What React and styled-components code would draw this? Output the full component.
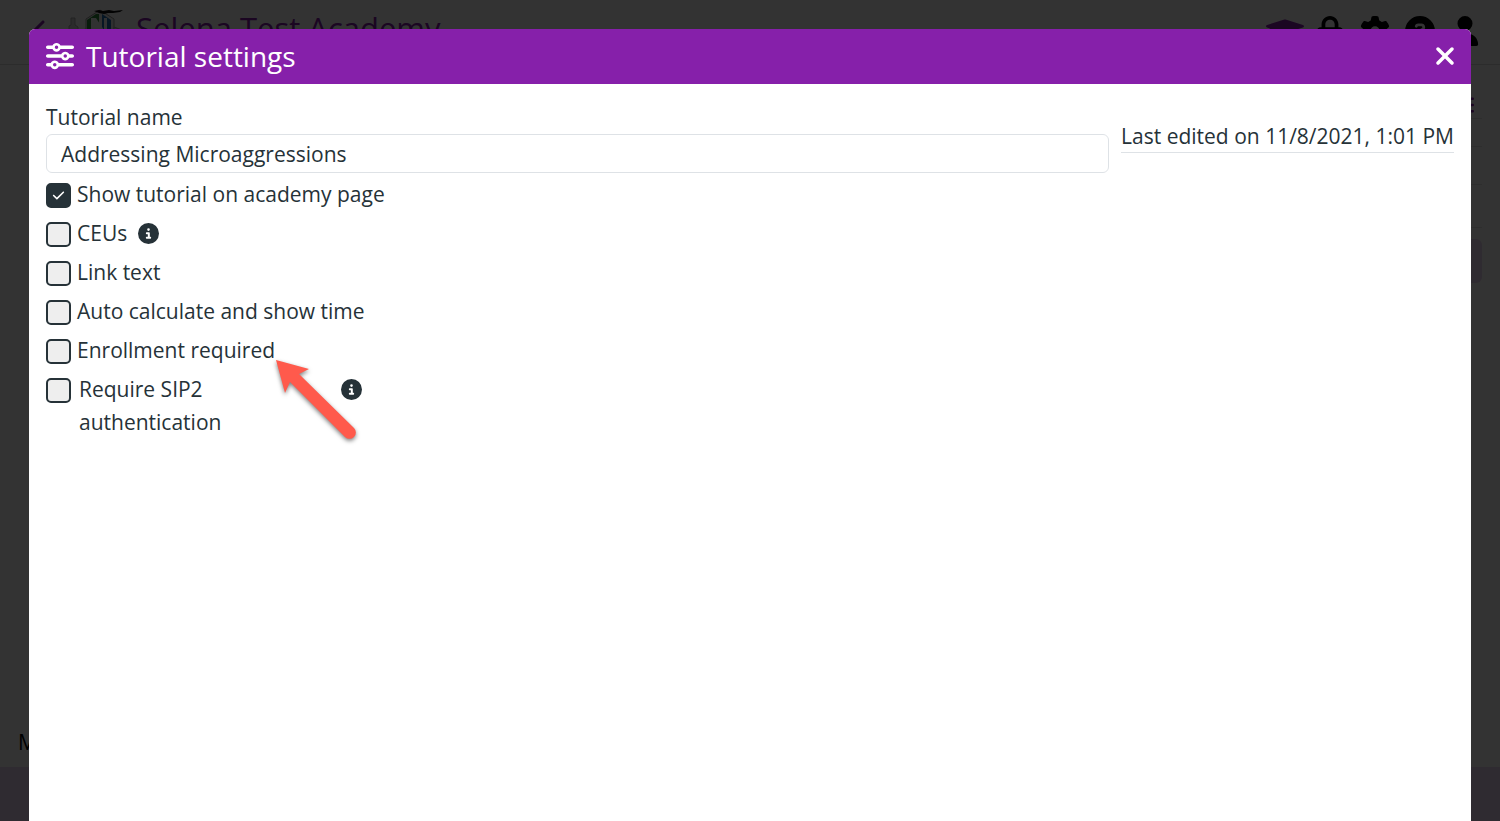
import React, { useState } from 'react'
import styled, { createGlobalStyle } from 'styled-components'
import { FaGraduationCap } from 'react-icons/fa'
import {
  FaCheck,
  FaChevronLeft,
  FaCircleInfo,
  FaCircleQuestion,
  FaGear,
  FaListUl,
  FaLock,
  FaSliders,
  FaUser,
  FaXmark,
} from 'react-icons/fa6'

const GlobalStyle = createGlobalStyle`
  * {
    box-sizing: border-box;
  }

  body {
    margin: 0;
    color: #263238;
    background: #fff;
    font-family: 'Open Sans', 'Noto Sans', sans-serif;
    font-size: 21px;
    line-height: 33px;
    overflow: hidden;
  }
`

/* academy page behind the dialog */

const Page = styled.div`
  display: flex;
  flex-direction: column;
  height: 100vh;
`

const PageHeader = styled.header`
  display: flex;
  align-items: center;
  gap: 12px;
  height: 65px;
  padding: 0 13px 2px 28px;
  border-bottom: 1px solid #dcdcdc;
`

const BackLink = styled.a`
  display: flex;
  width: 28px;
  color: #8620aa;
  font-size: 24px;
`

const PageTitle = styled.h1`
  flex: 1;
  margin: 0;
  padding-bottom: 6px;
  color: #8620aa;
  font-size: 31px;
  font-weight: 400;
  line-height: 40px;
`

const PageNav = styled.nav`
  display: flex;
  align-items: center;
`

const NavButton = styled.button`
  display: flex;
  justify-content: center;
  width: 45px;
  padding: 0;
  border: 0;
  background: none;
  color: ${(props) => props.$color || '#000'};
  font-size: 30px;
`

const PageMain = styled.main`
  flex: 1;
  display: flex;
  flex-direction: column;
  padding: 20px 18px 8px;
`

const TutorialList = styled.div`
  display: flex;
  flex-direction: column;
  align-self: flex-end;
  width: 50%;
`

const ListTools = styled.div`
  display: flex;
  justify-content: flex-end;
  height: 33px;
  padding: 10px 8px 0;
  color: #8620aa;
`

const ListRow = styled.div`
  height: ${(props) => props.$height}px;
  border-top: 1px solid #e4e4e4;
`

const AddButton = styled.button`
  height: 44px;
  margin-top: 11px;
  border: 0;
  border-radius: 6px;
  background: #ecd4f2;
`

const Made = styled.p`
  margin: auto 0 0;
  color: #000;
`

const PageFooter = styled.footer`
  height: 54px;
  background: #ecd4f2;
`

/* dialog */

const Overlay = styled.div`
  position: fixed;
  inset: 0;
  display: flex;
  padding: 29px 29px 0;
  background: rgba(0, 0, 0, 0.8);
`

const Dialog = styled.section`
  position: relative;
  flex: 1;
  background: #fff;
  border-radius: 6px 6px 0 0;
  overflow: hidden;
`

const DialogHeader = styled.header`
  display: flex;
  align-items: center;
  gap: 12px;
  height: 55px;
  padding: 0 12px 1px 17px;
  color: #fff;
  background: #8620aa;
`

const DialogTitle = styled.h2`
  flex: 1;
  margin: 0;
  font-size: 28px;
  font-weight: 400;
  line-height: 36px;
`

const CloseButton = styled.button`
  display: flex;
  padding: 0;
  border: 0;
  background: none;
  color: #fff;
  cursor: pointer;
`

const DialogBody = styled.div`
  display: flex;
  align-items: flex-start;
  gap: 12px;
  padding: 17px;
`

const Form = styled.form`
  flex: 1;
  display: flex;
  flex-direction: column;
`

const NameInput = styled.input`
  height: 39px;
  margin-bottom: 5px;
  padding: 0 14px;
  border: 1px solid #dee2e6;
  border-radius: 6px;
  color: #263238;
  font: inherit;
`

const OptionRow = styled.div`
  display: flex;
  align-items: flex-start;
  gap: 11px;
  min-height: 39px;
`

const OptionLabel = styled.label`
  display: flex;
  gap: ${(props) => (props.$narrow ? 8 : 6)}px;
  width: ${(props) => (props.$narrow ? '284px' : 'auto')};
`

const OptionText = styled.span`
  max-width: ${(props) => (props.$narrow ? '160px' : 'none')};
`

const CheckArea = styled.span`
  display: grid;
  place-items: center;
  width: 25px;
  height: 35px;

  > * {
    grid-area: 1 / 1;
  }
`

const CheckInput = styled.input`
  appearance: none;
  width: 25px;
  height: 25px;
  margin: 0;
  border: 2px solid #263238;
  border-radius: 5px;
  background: #eee;

  &:checked {
    background: #263238;
  }
`

const InfoButton = styled.button`
  display: flex;
  align-items: center;
  height: 33px;
  padding: 0;
  border: 0;
  background: none;
  color: #263238;
`

const LastEdited = styled.p`
  margin: 19px 0 0;
  border-bottom: 1px solid #dee2e6;
  line-height: 32px;
`

const Arrow = styled.svg`
  position: absolute;
  top: 326px;
  left: 241px;
  pointer-events: none;
  filter: drop-shadow(0 2px 2px rgba(0, 0, 0, 0.5));
`

const optionList = [
  { id: 'show', text: 'Show tutorial on academy page' },
  { id: 'ceus', text: 'CEUs', info: true },
  { id: 'link', text: 'Link text' },
  { id: 'time', text: 'Auto calculate and show time' },
  { id: 'enroll', text: 'Enrollment required' },
  { id: 'sip2', text: 'Require SIP2 authentication', info: true, narrow: true },
]

const AcademyLogo = () => (
  <svg width="56" height="44" viewBox="0 0 56 44" aria-hidden="true">
    <path d="M1 22V17l2-1V9h4v7l3 2v4l8-2v22H1z" fill="#d8d8d8" stroke="#aaa" />
    <path d="M18 10l14-9 14 9v24l-14 8-14-8z" fill="#eee" stroke="#999" />
    <path d="M19 11l9-6h3v34l-12-7z" fill="#2e8b3d" />
    <path d="M34 5l9 6v21l-9 6z" fill="#1f6fb5" />
    <path d="M23 9h5l8 12V9h3v23h-4l-8-12v12h-4z" fill="#f4f8fa" />
    <path d="M46 18l8 3v20h-8z" fill="#d8d8d8" stroke="#aaa" />
    <path d="M26 2l5-1 4 1 6-1 5 1 9-1-3 2-7 1-5 0-4 1-5-1z" fill="#111" />
  </svg>
)

const Academy = () => (
  <Page>
    <PageHeader>
      <BackLink href="#" aria-label="Back">
        <FaChevronLeft />
      </BackLink>
      <AcademyLogo />
      <PageTitle>Selena Test Academy</PageTitle>
      <PageNav>
        <NavButton aria-label="Courses" $color="#8620aa"><FaGraduationCap size={38} /></NavButton>
        <NavButton aria-label="Privacy"><FaLock /></NavButton>
        <NavButton aria-label="Settings"><FaGear /></NavButton>
        <NavButton aria-label="Help"><FaCircleQuestion /></NavButton>
        <NavButton aria-label="Account"><FaUser /></NavButton>
      </PageNav>
    </PageHeader>
    <PageMain>
      <TutorialList>
        <ListTools><FaListUl size={20} /></ListTools>
        <ListRow $height={28} />
        <ListRow $height={38} />
        <ListRow $height={43} />
        <ListRow $height={1} />
        <AddButton aria-label="Add tutorial" />
      </TutorialList>
      <Made>Made with NicheAcademy</Made>
    </PageMain>
    <PageFooter />
  </Page>
)

const App = () => {
  const [checked, setChecked] = useState({ show: true })

  const toggle = (id) => setChecked({ ...checked, [id]: !checked[id] })

  return (
    <>
      <GlobalStyle />
      <Academy />
      <Overlay>
        <Dialog role="dialog" aria-labelledby="dialog-title">
          <DialogHeader>
            <FaSliders size={28} />
            <DialogTitle id="dialog-title">Tutorial settings</DialogTitle>
            <CloseButton aria-label="Close"><FaXmark size={28} /></CloseButton>
          </DialogHeader>
          <DialogBody>
            <Form>
              <label htmlFor="tutorial-name">Tutorial name</label>
              <NameInput id="tutorial-name" defaultValue="Addressing Microaggressions" />
              {optionList.map(({ id, text, info, narrow }) => (
                <OptionRow key={id}>
                  <OptionLabel $narrow={narrow}>
                    <CheckArea>
                      <CheckInput type="checkbox" checked={!!checked[id]} onChange={() => toggle(id)} />
                      {checked[id] && <FaCheck size={13} color="#fff" />}
                    </CheckArea>
                    <OptionText $narrow={narrow}>{text}</OptionText>
                  </OptionLabel>
                  {info && (
                    <InfoButton type="button" aria-label={`About ${text}`}>
                      <FaCircleInfo size={21} />
                    </InfoButton>
                  )}
                </OptionRow>
              ))}
            </Form>
            <LastEdited>Last edited on 11/8/2021, 1:01 PM</LastEdited>
          </DialogBody>
          <Arrow width="92" height="92" viewBox="0 0 92 92" aria-hidden="true">
            <path d="M6 5L39 14L29 19L84 73A6 6 0 0 1 75 82L20 27L15 38Z" fill="#ff5a4c" />
          </Arrow>
        </Dialog>
      </Overlay>
    </>
  )
}

export default App
